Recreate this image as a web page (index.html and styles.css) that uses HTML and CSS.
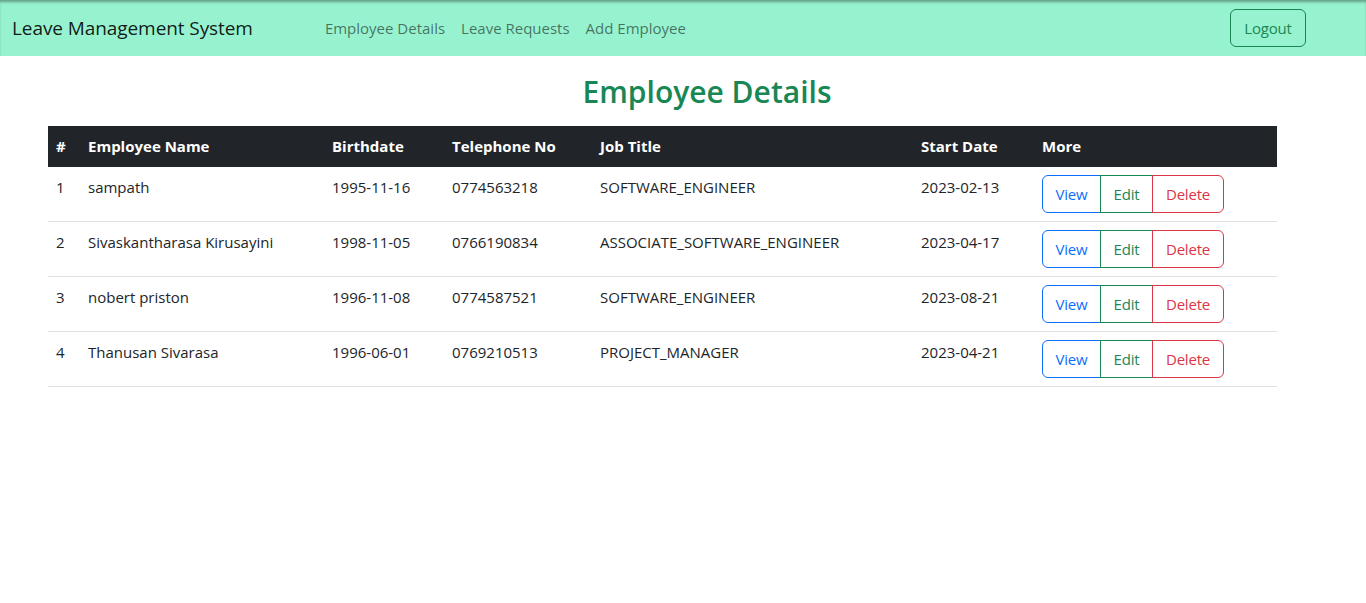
FILE: index.html
```html
<!DOCTYPE html>
<html lang="en">
<head>
<meta charset="utf-8">
<title>Leave Management System</title>
<link rel="stylesheet" href="styles.css">
</head>
<body>
<nav class="navbar">
  <a class="brand" href="#">Leave Management System</a>
  <ul class="nav-links">
    <li><a href="#">Employee Details</a></li>
    <li><a href="#">Leave Requests</a></li>
    <li><a href="#">Add Employee</a></li>
  </ul>
  <button class="btn btn-logout">Logout</button>
</nav>
<main class="content">
  <h2 class="title">Employee Details</h2>
  <table class="table">
    <colgroup>
      <col class="c-num"><col class="c-name"><col class="c-birth"><col class="c-tel"><col class="c-job"><col class="c-start"><col class="c-more">
    </colgroup>
    <thead>
      <tr><th>#</th><th>Employee Name</th><th>Birthdate</th><th>Telephone No</th><th>Job Title</th><th>Start Date</th><th>More</th></tr>
    </thead>
    <tbody>
      <tr><td>1</td><td>sampath</td><td>1995-11-16</td><td>0774563218</td><td>SOFTWARE_ENGINEER</td><td>2023-02-13</td>
        <td><div class="btn-group"><button class="btn b-view">View</button><button class="btn b-edit">Edit</button><button class="btn b-del">Delete</button></div></td></tr>
      <tr><td>2</td><td>Sivaskantharasa Kirusayini</td><td>1998-11-05</td><td>0766190834</td><td>ASSOCIATE_SOFTWARE_ENGINEER</td><td>2023-04-17</td>
        <td><div class="btn-group"><button class="btn b-view">View</button><button class="btn b-edit">Edit</button><button class="btn b-del">Delete</button></div></td></tr>
      <tr><td>3</td><td>nobert priston</td><td>1996-11-08</td><td>0774587521</td><td>SOFTWARE_ENGINEER</td><td>2023-08-21</td>
        <td><div class="btn-group"><button class="btn b-view">View</button><button class="btn b-edit">Edit</button><button class="btn b-del">Delete</button></div></td></tr>
      <tr><td>4</td><td>Thanusan Sivarasa</td><td>1996-06-01</td><td>0769210513</td><td>PROJECT_MANAGER</td><td>2023-04-21</td>
        <td><div class="btn-group"><button class="btn b-view">View</button><button class="btn b-edit">Edit</button><button class="btn b-del">Delete</button></div></td></tr>
    </tbody>
  </table>
</main>
</body>
</html>
```
FILE: styles.css
```css
* { box-sizing: border-box; }
html, body { margin: 0; padding: 0; }
body {
  font-family: "Open Sans", "Noto Sans", sans-serif;
  font-size: 15px;
  line-height: 1.6;
  color: #212529;
  background: #fff;
}
.navbar {
  height: 56px;
  display: flex;
  align-items: center;
  padding: 0 60px 0 12px;
  background: #97f2cf;
  box-shadow: inset 0 3px 3px -1px rgba(0, 0, 0, 0.35);
}
.brand {
  font-size: 19px;
  color: rgba(0, 0, 0, 0.9);
  text-decoration: none;
  margin-right: 64px;
  letter-spacing: -0.08px;
}
.nav-links {
  list-style: none;
  margin: 0;
  padding: 0;
  display: flex;
  flex: 1;
}
.nav-links a {
  display: block;
  padding: 8px;
  color: rgba(0, 0, 0, 0.55);
  text-decoration: none;
}
.btn {
  font-family: inherit;
  font-size: 15px;
  line-height: 24px;
  padding: 6px 12px;
  background: transparent;
  border: 1px solid;
  border-radius: 6px;
  cursor: pointer;
  letter-spacing: -0.2px;
}
.btn-logout {
  width: 76px;
  height: 38px;
  color: #198754;
  border-color: #198754;
}
.content { padding-top: 17px; }
.title {
  margin: 0 0 15px;
  padding-left: 48px;
  text-align: center;
  font-size: 30px;
  font-weight: 600;
  line-height: 38px;
  color: #198754;
}
.table {
  margin-left: 48px;
  width: 1229px;
  border-collapse: collapse;
  table-layout: fixed;
}
.c-num { width: 32px; }
.c-name { width: 244px; }
.c-birth { width: 120px; }
.c-tel { width: 148px; }
.c-job { width: 321px; }
.c-start { width: 121px; }
.c-more { width: 243px; }
.table th, .table td {
  text-align: left;
  vertical-align: top;
  padding: 8px;
}
.table thead th {
  background: #212529;
  color: #fff;
  font-weight: 700;
  height: 41px;
  line-height: 24px;
}
.table tbody td {
  border-bottom: 1px solid #dee2e6;
  line-height: 24px;
}
.btn-group { display: flex; }
.btn-group .btn { height: 38px; border-radius: 0; }
.btn-group .btn:first-child { border-radius: 6px 0 0 6px; }
.btn-group .btn:last-child { border-radius: 0 6px 6px 0; }
.btn-group .btn + .btn { margin-left: -1px; }
.b-view { width: 59px; color: #0d6efd; border-color: #0d6efd; }
.b-edit { width: 53px; color: #198754; border-color: #198754; position: relative; }
.b-del { width: 72px; color: #dc3545; border-color: #dc3545; position: relative; }
```
